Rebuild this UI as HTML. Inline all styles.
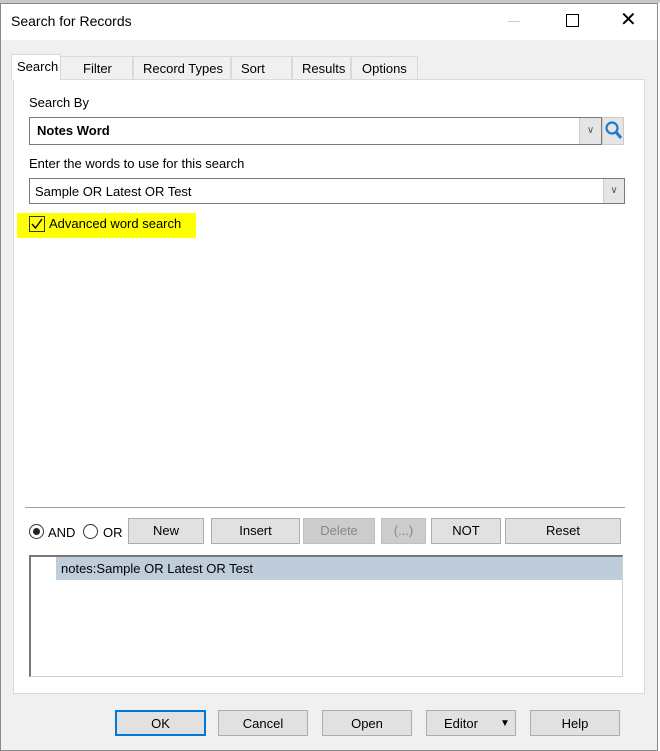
<!DOCTYPE html>
<html><head><style>
*{margin:0;padding:0;box-sizing:border-box}
body{width:660px;height:751px;background:#fff;font-family:"Liberation Sans",sans-serif;font-size:13px;color:#000;position:relative;overflow:hidden}
.a{position:absolute}
.btn{position:absolute;background:#e1e1e1;border:1px solid #adadad;text-align:center;line-height:24px;font-size:13px}
.tab{position:absolute;top:56px;height:23px;background:#f0f0f0;border:1px solid #d9d9d9;border-bottom:none;line-height:23px;padding-left:6px;font-size:13px}
</style></head><body>
<div class="a" style="left:0;top:0;width:660px;height:3px;background:#c8c8c8"></div>
<div class="a" style="left:0;top:3px;width:658px;height:748px;background:#f0f0f0;border:1px solid #888"></div>
<div class="a" style="left:1px;top:4px;width:656px;height:36px;background:#fff"></div>
<div class="a" style="left:11px;top:13px;font-size:14px">Search for Records</div>
<div class="a" style="left:508px;top:21px;width:12px;height:1px;background:#ccc"></div>
<div class="a" style="left:566px;top:14px;width:13px;height:13px;border:1px solid #000"></div>
<div class="a" style="left:620px;top:9px;font-size:20px;line-height:22px">✕</div>
<div class="a" style="left:13px;top:79px;width:632px;height:615px;background:#fff;border:1px solid #d9d9d9"></div>
<div class="tab" style="left:60px;width:73px;padding-left:22px">Filter</div>
<div class="tab" style="left:133px;width:98px;padding-left:9px">Record Types</div>
<div class="tab" style="left:231px;width:61px;padding-left:9px">Sort</div>
<div class="tab" style="left:292px;width:59px;padding-left:9px">Results</div>
<div class="tab" style="left:351px;width:67px;padding-left:10px">Options</div>
<div class="tab" style="left:11px;top:54px;height:26px;width:50px;background:#fff;padding-left:5px;line-height:24px;z-index:2">Search</div>
<div class="a" style="left:29px;top:95px">Search By</div>
<div class="a" style="left:29px;top:117px;width:573px;height:28px;border:1px solid #7a7a7a;background:#fff"></div>
<div class="a" style="left:37px;top:123px;font-weight:bold">Notes Word</div>
<div class="a" style="left:579px;top:118px;width:22px;height:26px;background:#e5e5e5;border-left:1px solid #ccc;text-align:center;line-height:26px;font-size:10px;color:#555">∨</div>
<div class="a" style="left:602px;top:117px;width:22px;height:28px;background:#e5e5e5;border:1px solid #ccc"></div>
<svg class="a" style="left:603px;top:119px" width="20" height="22"><circle cx="9" cy="9" r="5.5" fill="none" stroke="#1e7ad2" stroke-width="2.2"/><line x1="13" y1="13" x2="18" y2="19" stroke="#1e7ad2" stroke-width="3"/></svg>
<div class="a" style="left:29px;top:156px">Enter the words to use for this search</div>
<div class="a" style="left:29px;top:178px;width:596px;height:26px;border:1px solid #7a7a7a;background:#fff"></div>
<div class="a" style="left:35px;top:184px">Sample OR Latest OR Test</div>
<div class="a" style="left:603px;top:179px;width:21px;height:24px;background:#e5e5e5;border-left:1px solid #ccc;text-align:center;line-height:24px;font-size:10px;color:#555">∨</div>
<div class="a" style="left:17px;top:213px;width:179px;height:25px;background:#ffff00"></div>
<div class="a" style="left:29px;top:216px;width:16px;height:16px;border:1px solid #333;background:#ffff00"></div>
<svg class="a" style="left:30px;top:217px" width="14" height="14"><path d="M2 7 L5.5 11 L12 2" fill="none" stroke="#000" stroke-width="1.4"/></svg>
<div class="a" style="left:49px;top:216px">Advanced word search</div>
<div class="a" style="left:25px;top:507px;width:600px;height:1px;background:#a0a0a0"></div>
<div class="a" style="left:29px;top:524px;width:15px;height:15px;border:1px solid #333;border-radius:50%"></div>
<div class="a" style="left:33px;top:528px;width:7px;height:7px;background:#222;border-radius:50%"></div>
<div class="a" style="left:48px;top:525px">AND</div>
<div class="a" style="left:83px;top:524px;width:15px;height:15px;border:1px solid #333;border-radius:50%"></div>
<div class="a" style="left:103px;top:525px">OR</div>
<div class="btn" style="left:128px;top:518px;width:76px;height:26px">New</div>
<div class="btn" style="left:211px;top:518px;width:89px;height:26px">Insert</div>
<div class="btn" style="left:303px;top:518px;width:72px;height:26px;background:#ccc;color:#888;border-color:#bfbfbf">Delete</div>
<div class="btn" style="left:381px;top:518px;width:45px;height:26px;background:#ccc;color:#888;border-color:#bfbfbf">(...)</div>
<div class="btn" style="left:431px;top:518px;width:70px;height:26px">NOT</div>
<div class="btn" style="left:505px;top:518px;width:116px;height:26px">Reset</div>
<div class="a" style="left:29px;top:555px;width:594px;height:122px;border:1px solid #d0d0d0;border-top:2px solid #777;border-left:2px solid #777;background:#fff"></div>
<div class="a" style="left:56px;top:557px;width:566px;height:23px;background:#bfcddb;line-height:24px;padding-left:5px">notes:Sample OR Latest OR Test</div>
<div class="btn" style="left:115px;top:710px;width:91px;height:26px;border:2px solid #0078d7;line-height:23px">OK</div>
<div class="btn" style="left:218px;top:710px;width:90px;height:26px;line-height:25px">Cancel</div>
<div class="btn" style="left:322px;top:710px;width:90px;height:26px;line-height:25px">Open</div>
<div class="btn" style="left:426px;top:710px;width:90px;height:26px;line-height:25px;text-align:left;padding-left:17px">Editor <span style="position:absolute;left:73px;top:0;font-size:10px">▼</span></div>
<div class="btn" style="left:530px;top:710px;width:90px;height:26px;line-height:25px">Help</div>
</body></html>
